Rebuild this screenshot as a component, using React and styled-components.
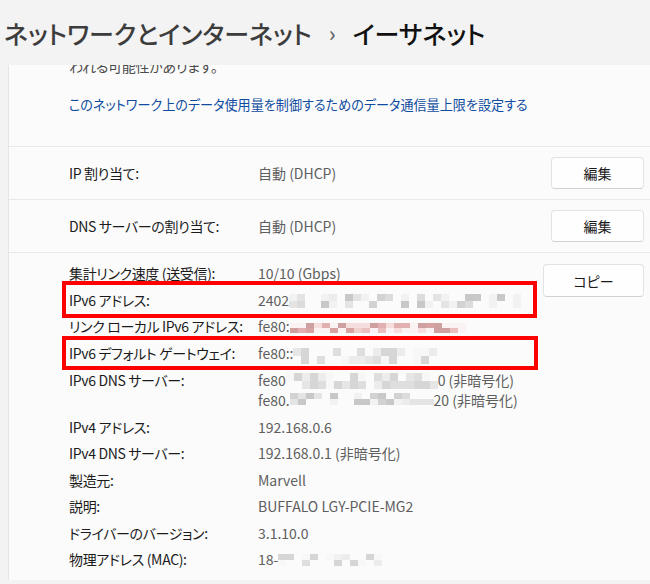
import React from "react";
import styled, { createGlobalStyle, css } from "styled-components";

const Global = createGlobalStyle`
  html, body { margin: 0; padding: 0; background: #f3f3f3; }
  body {
    width: 650px; height: 584px; overflow: hidden;
    font-family: "Noto Sans CJK JP", "Noto Sans", sans-serif;
    font-feature-settings: "palt";
    -webkit-font-smoothing: antialiased;
  }
`;

const Page = styled.div`
  width: 650px;
  height: 584px;
  display: flex;
  flex-direction: column;
  background: #f3f3f3;
  overflow: hidden;
`;

const Header = styled.header`
  height: 65px;
  flex: none;
  display: flex;
  align-items: center;
  padding-left: 4px;
  font-size: 25px;
  font-weight: 500;
  white-space: nowrap;
`;

const Crumb = styled.span`
  color: ${(p) => (p.$current ? "#111" : "#3c3c3c")};
`;

const Chevron = styled.span`
  color: #666;
  font-size: 22px;
  margin: 0 17px 0 17px;
  position: relative;
  top: -1px;
`;

const Card = styled.main`
  margin-left: 8px;
  height: 515px;
  flex: none;
  background: #fbfbfb;
  border-left: 1px solid #e6e6e6;
  display: flex;
  flex-direction: column;
  overflow: hidden;
`;

const Section = styled.section`
  background: #fbfbfb;
  border-bottom: 1px solid #e9e9e9;
  font-size: 14px;
  line-height: 20px;
  color: #1b1b1b;
`;

const TopSection = styled(Section)`
  height: 81px;
  padding-left: 60px;
  display: flex;
  flex-direction: column;
`;

const ClippedNote = styled.div`
  margin-top: -9px;
  color: #4a4a4a;
  letter-spacing: -0.3px;
`;

const Link = styled.a`
  margin-top: 19px;
  font-size: 13.1px;
  color: #0f4c9f;
  text-decoration: none;
  cursor: pointer;
`;

const SettingRow = styled(Section)`
  height: 52px;
  display: flex;
  align-items: center;
  padding: 0 6px 0 60px;
`;

const Label = styled.span`
  width: 189px;
  flex: none;
  color: #1b1b1b;
  white-space: nowrap;
  letter-spacing: -0.35px;
`;

const Value = styled.span`
  flex: 1;
  color: #5e5e5e;
  white-space: nowrap;
  display: inline-flex;
  align-items: center;
`;

const Button = styled.button`
  width: ${(p) => p.$w}px;
  height: ${(p) => p.$h}px;
  flex: none;
  font-family: inherit;
  font-feature-settings: "palt";
  font-size: 14px;
  color: #1b1b1b;
  background: #fefefe;
  border: 1px solid #e3e3e3;
  border-bottom-color: #d2d2d2;
  border-radius: 4px;
  padding: 0;
`;

const Details = styled(Section)`
  flex: 1;
  border-bottom: none;
  display: flex;
  align-items: flex-start;
  padding: 10px 6px 0 60px;
`;

const List = styled.div`
  flex: 1;
  display: flex;
  flex-direction: column;
  gap: 6.5px;
`;

const Row = styled.div`
  display: flex;
  position: relative;
  ${(p) =>
    p.$box &&
    css`
      &::after {
        content: "";
        position: absolute;
        left: -7px;
        width: ${p.$box.w}px;
        top: ${p.$box.top}px;
        bottom: ${p.$box.bottom}px;
        border: 4px solid #ff0000;
        box-sizing: border-box;
        pointer-events: none;
      }
    `}
`;

const Lines = styled.div`
  display: flex;
  flex-direction: column;
`;

const CopyWrap = styled.div`
  margin-top: 1px;
`;

/* mosaic (blurred / redacted text) */
const MosaicGrid = styled.span`
  display: inline-grid;
  grid-template-columns: repeat(${(p) => p.$cols}, ${(p) => p.$cw}px);
  grid-auto-rows: ${(p) => p.$ch}px;
  vertical-align: middle;
  margin-top: ${(p) => p.$mt || 0}px;
`;

const Cell = styled.span`
  background: ${(p) => p.$c};
`;

const PALETTES = {
  gray: ["#fbfbfb", "#f2f2f2", "#ececec", "#e4e4e4", "#dcdcdc", "#d2d2d2", "#c8c8c8"],
  pink: ["#fbf3f3", "#f6dede", "#f0cfcf", "#e9bfbf", "#e2b0b0", "#d8a3a3", "#cfa0a0"],
  light: ["#fbfbfb", "#f7f7f7", "#f1f1f1", "#ececec", "#e6e6e6", "#dedede", "#d6d6d6"],
};

function seeded(seed) {
  let s = seed;
  return () => {
    s = (s * 9301 + 49297) % 233280;
    return s / 233280;
  };
}

function Mosaic({ cols, rows = 2, cw = 8, ch = 7, seed = 1, palette = "gray", mt }) {
  const rnd = seeded(seed);
  const pal = PALETTES[palette];
  const cells = [];
  for (let i = 0; i < cols * rows; i++) {
    const r = rnd();
    const idx = Math.min(pal.length - 1, Math.floor(r * r * pal.length * 1.1) + (r > 0.5 ? 1 : 0));
    cells.push(<Cell key={i} $c={pal[idx]} />);
  }
  return (
    <MosaicGrid $cols={cols} $cw={cw} $ch={ch} $mt={mt}>
      {cells}
    </MosaicGrid>
  );
}

export default function App() {
  return (
    <>
      <Global />
      <Page>
        <Header>
          <Crumb>ネットワークとインターネット</Crumb>
          <Chevron>›</Chevron>
          <Crumb $current>イーサネット</Crumb>
        </Header>
        <Card>
          <TopSection>
            <ClippedNote>われる可能性があります。</ClippedNote>
            <Link>このネットワーク上のデータ使用量を制御するためのデータ通信量上限を設定する</Link>
          </TopSection>
          <SettingRow>
            <Label>IP 割り当て:</Label>
            <Value>自動 (DHCP)</Value>
            <Button $w={93} $h={32}>編集</Button>
          </SettingRow>
          <SettingRow>
            <Label>DNS サーバーの割り当て:</Label>
            <Value>自動 (DHCP)</Value>
            <Button $w={93} $h={32}>編集</Button>
          </SettingRow>
          <Details>
            <List>
              <Row>
                <Label>集計リンク速度 (送受信):</Label>
                <Value>10/10 (Gbps)</Value>
              </Row>
              <Row $box={{ w: 475, top: -9, bottom: -8 }}>
                <Label>IPv6 アドレス:</Label>
                <Value>
                  2402
                  <Mosaic cols={29} seed={7} mt={3} />
                </Value>
              </Row>
              <Row>
                <Label>リンク ローカル IPv6 アドレス:</Label>
                <Value>
                  fe80:
                  <Mosaic cols={22} rows={2} ch={5} seed={3} palette="pink" mt={4} />
                </Value>
              </Row>
              <Row $box={{ w: 476, top: -7, bottom: -6 }}>
                <Label>IPv6 デフォルト ゲートウェイ:</Label>
                <Value>
                  fe80::
                  <Mosaic cols={18} rows={2} ch={8} seed={11} palette="light" mt={5} />
                </Value>
              </Row>
              <Row>
                <Label>IPv6 DNS サーバー:</Label>
                <Lines>
                  <Value>
                    fe80
                    <Mosaic cols={19} rows={2} ch={8} seed={5} palette="light" mt={2} />
                    0 (非暗号化)
                  </Value>
                  <Value>
                    fe80.
                    <Mosaic cols={18} rows={2} ch={6} seed={13} palette="gray" mt={-2} />
                    20 (非暗号化)
                  </Value>
                </Lines>
              </Row>
              <Row>
                <Label>IPv4 アドレス:</Label>
                <Value>192.168.0.6</Value>
              </Row>
              <Row>
                <Label>IPv4 DNS サーバー:</Label>
                <Value>192.168.0.1 (非暗号化)</Value>
              </Row>
              <Row>
                <Label>製造元:</Label>
                <Value>Marvell</Value>
              </Row>
              <Row>
                <Label>説明:</Label>
                <Value>BUFFALO LGY-PCIE-MG2</Value>
              </Row>
              <Row>
                <Label>ドライバーのバージョン:</Label>
                <Value>3.1.10.0</Value>
              </Row>
              <Row>
                <Label>物理アドレス (MAC):</Label>
                <Value>
                  18-
                  <Mosaic cols={14} rows={2} ch={6} seed={17} palette="light" mt={2} />
                </Value>
              </Row>
            </List>
            <CopyWrap>
              <Button $w={101} $h={33}>コピー</Button>
            </CopyWrap>
          </Details>
        </Card>
      </Page>
    </>
  );
}
